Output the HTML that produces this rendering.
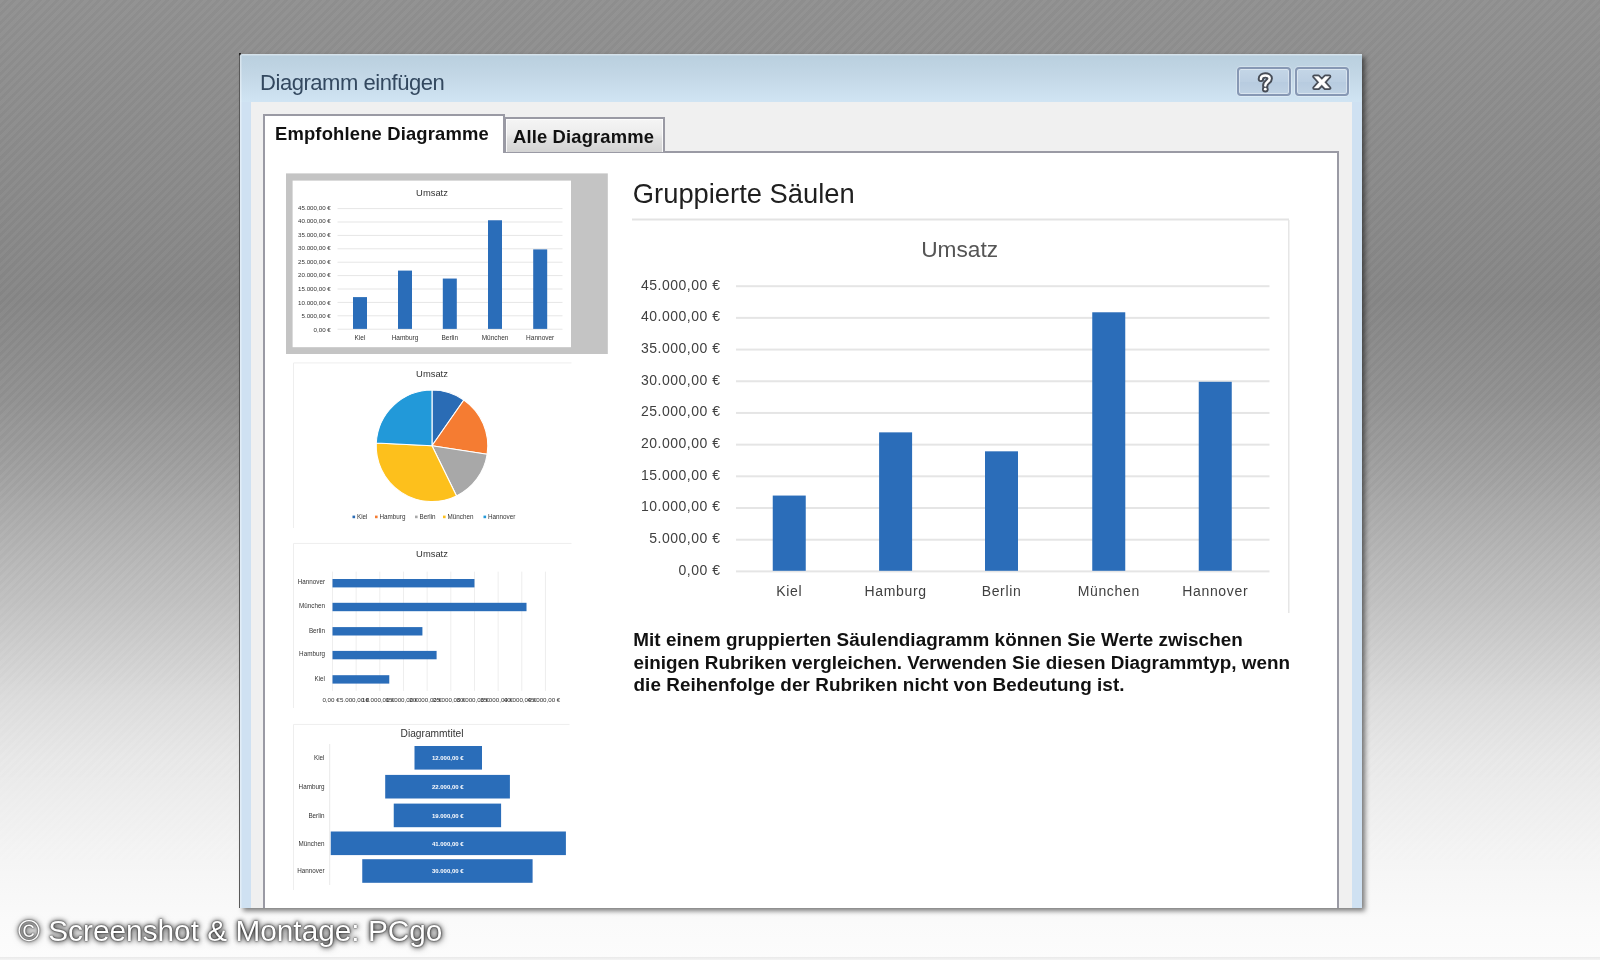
<!DOCTYPE html>
<html lang="de">
<head>
<meta charset="utf-8">
<title>Diagramm einfügen</title>
<style>
html,body{margin:0;padding:0;}
body{width:1600px;height:960px;overflow:hidden;position:relative;font-family:"Liberation Sans",sans-serif;background:#8e8e8e;}
.abs{position:absolute;}
#dlg,#content,#wm{filter:blur(0.4px);}
#bg{left:0;top:0;width:1600px;height:960px;
  background:linear-gradient(to bottom,#919191 0px,#8c8c8c 150px,#878787 300px,#929292 400px,#a4a4a4 480px,#c2c2c2 600px,#dddddd 700px,#e9e9e9 760px,#f4f4f4 850px,#fafafa 920px,#fcfcfc 960px);}
#stripes{left:0;top:0;width:1600px;height:960px;
  background:repeating-linear-gradient(135deg,rgba(255,255,255,0.02) 0px,rgba(255,255,255,0.02) 3px,rgba(0,0,0,0.02) 3px,rgba(0,0,0,0.02) 6px);-webkit-mask-image:linear-gradient(to bottom,#000 0px,#000 450px,rgba(0,0,0,.25) 800px,transparent 900px);mask-image:linear-gradient(to bottom,#000 0px,#000 450px,rgba(0,0,0,.25) 800px,transparent 900px);}
#botline{left:0;top:957px;width:1600px;height:3px;background:linear-gradient(to bottom,#e9e9e9,#f4f4f4);}
#wm{left:18px;top:914px;font-size:29.8px;color:#fff;white-space:nowrap;line-height:34px;
  text-shadow:0 0 2px #000,0 0 5px rgba(0,0,0,.85),1px 1px 7px rgba(0,0,0,.6);}
/* dialog */
#dlg{left:240px;top:54px;width:1122px;height:854px;background:#cfe1f2;box-shadow:3px 3px 5px rgba(0,0,0,.5), -1px 0 0 #5e5e5e;overflow:hidden;border-top-left-radius:3px;}
#titlebar{left:0;top:0;width:1122px;height:48px;background:linear-gradient(to bottom,#b9cfde 0%,#c3d7e6 45%,#d0e4f3 100%);}
#title{left:20px;top:15.5px;font-size:22px;letter-spacing:-0.45px;color:#33485f;white-space:nowrap;line-height:26px;}
#client{left:11px;top:48px;width:1101px;height:806px;background:#f0f0f0;}
.capbtn{top:13.3px;width:53.5px;height:28.8px;box-sizing:border-box;border:2px solid #8798b4;border-radius:4px;background:linear-gradient(to bottom,#c4d6e7 0%,#bccfe2 50%,#b7cbdf 51%,#bfd2e4 100%);box-shadow:inset 0 0 0 1px rgba(255,255,255,.4),0 0 0 1px rgba(255,255,255,.3);}
/* tabs */
#panel{left:23px;top:96.6px;width:1076px;height:760px;background:#fff;border:2px solid #9a9aa4;box-sizing:border-box;}
#tab1{left:23px;top:59.6px;width:242.4px;height:39px;background:#fff;border:2px solid #9a9aa4;border-bottom:none;box-sizing:border-box;}
#tab2{left:263.6px;top:63px;width:161.4px;height:34.6px;background:linear-gradient(to bottom,#f5f5f5 0%,#ececec 45%,#e0e0e0 60%,#d3d3d3 100%);border:2px solid #9a9aa4;border-bottom:none;box-sizing:border-box;box-shadow:inset 1px 1px 0 rgba(255,255,255,.8),inset -1px 0 0 rgba(255,255,255,.8);}
.tabtxt{font-weight:bold;font-size:18.4px;color:#111;white-space:nowrap;line-height:22px;}
</style>
</head>
<body>
<div id="bg" class="abs"></div>
<div id="stripes" class="abs"></div>
<div id="botline" class="abs"></div>

<div class="abs" style="left:238.5px;top:53px;width:2.5px;height:3px;background:#222;filter:blur(0.4px)"></div>
<div id="dlg" class="abs">
  <div id="titlebar" class="abs"></div>
  <div class="abs" style="left:0;top:0;width:1122px;height:854px;box-shadow:inset 1.5px 1.5px 0 rgba(255,255,255,.4);pointer-events:none"></div>
  <div id="title" class="abs">Diagramm einfügen</div>
  <div class="capbtn abs" style="left:997.3px"></div>
  <div class="capbtn abs" style="left:1055.3px"></div>
  <div id="client" class="abs"></div>
  <div id="panel" class="abs"></div>
  <div id="tab2" class="abs"></div>
  <div id="tab1" class="abs"></div>
  <div class="tabtxt abs" style="left:35px;top:69px;letter-spacing:0.17px">Empfohlene Diagramme</div>
  <div class="tabtxt abs" style="left:273px;top:72.2px;letter-spacing:0.15px">Alle Diagramme</div>
  <!--CONTENT-->
</div>

<!--SVG-START-->
<svg class="abs" id="content" style="left:0;top:0" width="1600" height="960" viewBox="0 0 1600 960" font-family="Liberation Sans, sans-serif">
<defs><filter id="b1" x="-5%" y="-5%" width="110%" height="110%"><feGaussianBlur stdDeviation="0.6"/></filter><filter id="b2" x="-5%" y="-20%" width="110%" height="140%"><feGaussianBlur stdDeviation="0.45"/></filter></defs>
<g id="main">
<text x="632.8" y="203" font-size="27.35" fill="#1f1f1f">Gruppierte Säulen</text>
<rect x="632" y="218.5" width="657" height="2" fill="#e3e3e3"/>
<rect x="1288" y="220" width="1.5" height="393" fill="#e6e6e6"/>
<text x="959.6" y="257.2" font-size="22.7" fill="#555" text-anchor="middle">Umsatz</text>
<rect x="736" y="570.40" width="533.5" height="2" fill="#e5e5e5"/>
<text x="720.5" y="574.80" font-size="14" letter-spacing="0.5" fill="#404040" text-anchor="end">0,00 €</text>
<rect x="736" y="538.71" width="533.5" height="2" fill="#e5e5e5"/>
<text x="720.5" y="543.11" font-size="14" letter-spacing="0.5" fill="#404040" text-anchor="end">5.000,00 €</text>
<rect x="736" y="507.02" width="533.5" height="2" fill="#e5e5e5"/>
<text x="720.5" y="511.42" font-size="14" letter-spacing="0.5" fill="#404040" text-anchor="end">10.000,00 €</text>
<rect x="736" y="475.33" width="533.5" height="2" fill="#e5e5e5"/>
<text x="720.5" y="479.73" font-size="14" letter-spacing="0.5" fill="#404040" text-anchor="end">15.000,00 €</text>
<rect x="736" y="443.64" width="533.5" height="2" fill="#e5e5e5"/>
<text x="720.5" y="448.04" font-size="14" letter-spacing="0.5" fill="#404040" text-anchor="end">20.000,00 €</text>
<rect x="736" y="411.95" width="533.5" height="2" fill="#e5e5e5"/>
<text x="720.5" y="416.35" font-size="14" letter-spacing="0.5" fill="#404040" text-anchor="end">25.000,00 €</text>
<rect x="736" y="380.26" width="533.5" height="2" fill="#e5e5e5"/>
<text x="720.5" y="384.66" font-size="14" letter-spacing="0.5" fill="#404040" text-anchor="end">30.000,00 €</text>
<rect x="736" y="348.57" width="533.5" height="2" fill="#e5e5e5"/>
<text x="720.5" y="352.97" font-size="14" letter-spacing="0.5" fill="#404040" text-anchor="end">35.000,00 €</text>
<rect x="736" y="316.88" width="533.5" height="2" fill="#e5e5e5"/>
<text x="720.5" y="321.28" font-size="14" letter-spacing="0.5" fill="#404040" text-anchor="end">40.000,00 €</text>
<rect x="736" y="285.19" width="533.5" height="2" fill="#e5e5e5"/>
<text x="720.5" y="289.59" font-size="14" letter-spacing="0.5" fill="#404040" text-anchor="end">45.000,00 €</text>
<rect x="772.75" y="495.56" width="33" height="75.24" fill="#2b6db9"/>
<text x="789.25" y="596" font-size="14" letter-spacing="0.65" fill="#404040" text-anchor="middle">Kiel</text>
<rect x="879.10" y="432.36" width="33" height="138.44" fill="#2b6db9"/>
<text x="895.60" y="596" font-size="14" letter-spacing="0.65" fill="#404040" text-anchor="middle">Hamburg</text>
<rect x="985.00" y="451.32" width="33" height="119.48" fill="#2b6db9"/>
<text x="1001.50" y="596" font-size="14" letter-spacing="0.65" fill="#404040" text-anchor="middle">Berlin</text>
<rect x="1092.25" y="312.28" width="33" height="258.52" fill="#2b6db9"/>
<text x="1108.75" y="596" font-size="14" letter-spacing="0.65" fill="#404040" text-anchor="middle">München</text>
<rect x="1198.75" y="381.80" width="33" height="189.00" fill="#2b6db9"/>
<text x="1215.25" y="596" font-size="14" letter-spacing="0.65" fill="#404040" text-anchor="middle">Hannover</text>
</g>
<g font-size="18.86" font-weight="bold" fill="#111" lengthAdjust="spacing">
<text x="633.3" y="646" textLength="609.5">Mit einem gruppierten Säulendiagramm können Sie Werte zwischen</text>
<text x="633.5" y="668.6" textLength="656.5">einigen Rubriken vergleichen. Verwenden Sie diesen Diagrammtyp, wenn</text>
<text x="633.5" y="691.2" textLength="491">die Reihenfolge der Rubriken nicht von Bedeutung ist.</text>
</g>
<g id="thumbs">
<rect x="286" y="173.4" width="321.8" height="180.6" fill="#c4c4c4"/>
<rect x="292.6" y="180.6" width="278.4" height="166.6" fill="#fff"/>
<g filter="url(#b1)">
<text x="432.00" y="195.50" font-size="9.4" text-anchor="middle" fill="#333" font-weight="normal" letter-spacing="0">Umsatz</text>
<rect x="337.5" y="328.70" width="225" height="1" fill="#e6e6e6"/>
<text x="330.75" y="331.60" font-size="6.2" text-anchor="end" fill="#333" font-weight="normal" letter-spacing="0">0,00 €</text>
<rect x="337.5" y="315.30" width="225" height="1" fill="#e6e6e6"/>
<text x="330.75" y="318.05" font-size="6.2" text-anchor="end" fill="#333" font-weight="normal" letter-spacing="0">5.000,00 €</text>
<rect x="337.5" y="301.90" width="225" height="1" fill="#e6e6e6"/>
<text x="330.75" y="304.50" font-size="6.2" text-anchor="end" fill="#333" font-weight="normal" letter-spacing="0">10.000,00 €</text>
<rect x="337.5" y="288.50" width="225" height="1" fill="#e6e6e6"/>
<text x="330.75" y="290.95" font-size="6.2" text-anchor="end" fill="#333" font-weight="normal" letter-spacing="0">15.000,00 €</text>
<rect x="337.5" y="275.10" width="225" height="1" fill="#e6e6e6"/>
<text x="330.75" y="277.40" font-size="6.2" text-anchor="end" fill="#333" font-weight="normal" letter-spacing="0">20.000,00 €</text>
<rect x="337.5" y="261.70" width="225" height="1" fill="#e6e6e6"/>
<text x="330.75" y="263.85" font-size="6.2" text-anchor="end" fill="#333" font-weight="normal" letter-spacing="0">25.000,00 €</text>
<rect x="337.5" y="248.30" width="225" height="1" fill="#e6e6e6"/>
<text x="330.75" y="250.30" font-size="6.2" text-anchor="end" fill="#333" font-weight="normal" letter-spacing="0">30.000,00 €</text>
<rect x="337.5" y="234.90" width="225" height="1" fill="#e6e6e6"/>
<text x="330.75" y="236.75" font-size="6.2" text-anchor="end" fill="#333" font-weight="normal" letter-spacing="0">35.000,00 €</text>
<rect x="337.5" y="221.50" width="225" height="1" fill="#e6e6e6"/>
<text x="330.75" y="223.20" font-size="6.2" text-anchor="end" fill="#333" font-weight="normal" letter-spacing="0">40.000,00 €</text>
<rect x="337.5" y="208.10" width="225" height="1" fill="#e6e6e6"/>
<text x="330.75" y="209.65" font-size="6.2" text-anchor="end" fill="#333" font-weight="normal" letter-spacing="0">45.000,00 €</text>
<rect x="353.00" y="297.10" width="14" height="31.80" fill="#2b6db9"/>
<text x="360.00" y="340.30" font-size="6.5" text-anchor="middle" fill="#333" font-weight="normal" letter-spacing="0">Kiel</text>
<rect x="398.00" y="270.60" width="14" height="58.30" fill="#2b6db9"/>
<text x="405.00" y="340.30" font-size="6.5" text-anchor="middle" fill="#333" font-weight="normal" letter-spacing="0">Hamburg</text>
<rect x="442.80" y="278.55" width="14" height="50.35" fill="#2b6db9"/>
<text x="449.80" y="340.30" font-size="6.5" text-anchor="middle" fill="#333" font-weight="normal" letter-spacing="0">Berlin</text>
<rect x="488.00" y="220.25" width="14" height="108.65" fill="#2b6db9"/>
<text x="495.00" y="340.30" font-size="6.5" text-anchor="middle" fill="#333" font-weight="normal" letter-spacing="0">München</text>
<rect x="533.20" y="249.40" width="14" height="79.50" fill="#2b6db9"/>
<text x="540.20" y="340.30" font-size="6.5" text-anchor="middle" fill="#333" font-weight="normal" letter-spacing="0">Hannover</text>
</g>
<path d="M293.5 528 V362.9 H571.5" fill="none" stroke="#eeeeee" stroke-width="1"/>
<g filter="url(#b1)">
<text x="432.00" y="376.60" font-size="9.4" text-anchor="middle" fill="#333" font-weight="normal" letter-spacing="0">Umsatz</text>
<path d="M432.0 445.8 L432.00 390.00 A55.8 55.8 0 0 1 463.88 400.00 Z" fill="#2b6cb5" stroke="#fff" stroke-width="1.1" stroke-linejoin="round"/>
<path d="M432.0 445.8 L463.88 400.00 A55.8 55.8 0 0 1 487.16 454.25 Z" fill="#f57c30" stroke="#fff" stroke-width="1.1" stroke-linejoin="round"/>
<path d="M432.0 445.8 L487.16 454.25 A55.8 55.8 0 0 1 456.57 495.90 Z" fill="#a8a8a8" stroke="#fff" stroke-width="1.1" stroke-linejoin="round"/>
<path d="M432.0 445.8 L456.57 495.90 A55.8 55.8 0 0 1 376.27 442.97 Z" fill="#fdc01f" stroke="#fff" stroke-width="1.1" stroke-linejoin="round"/>
<path d="M432.0 445.8 L376.27 442.97 A55.8 55.8 0 0 1 432.00 390.00 Z" fill="#2299d9" stroke="#fff" stroke-width="1.1" stroke-linejoin="round"/>
<rect x="352.5" y="515.6" width="2.6" height="2.6" fill="#2b6cb5"/>
<text x="357.00" y="519.40" font-size="6.3" text-anchor="start" fill="#333" font-weight="normal" letter-spacing="0">Kiel</text>
<rect x="375.0" y="515.6" width="2.6" height="2.6" fill="#f57c30"/>
<text x="379.50" y="519.40" font-size="6.3" text-anchor="start" fill="#333" font-weight="normal" letter-spacing="0">Hamburg</text>
<rect x="415.0" y="515.6" width="2.6" height="2.6" fill="#a8a8a8"/>
<text x="419.50" y="519.40" font-size="6.3" text-anchor="start" fill="#333" font-weight="normal" letter-spacing="0">Berlin</text>
<rect x="443.0" y="515.6" width="2.6" height="2.6" fill="#fdc01f"/>
<text x="447.50" y="519.40" font-size="6.3" text-anchor="start" fill="#333" font-weight="normal" letter-spacing="0">München</text>
<rect x="483.5" y="515.6" width="2.6" height="2.6" fill="#2299d9"/>
<text x="488.00" y="519.40" font-size="6.3" text-anchor="start" fill="#333" font-weight="normal" letter-spacing="0">Hannover</text>
</g>
<path d="M293.5 708 V543.4 H571.5" fill="none" stroke="#eeeeee" stroke-width="1"/>
<g filter="url(#b1)">
<text x="432.00" y="557.40" font-size="9.4" text-anchor="middle" fill="#333" font-weight="normal" letter-spacing="0">Umsatz</text>
<rect x="332.00" y="571.6" width="1" height="119.3" fill="#eeeeee"/>
<text x="331.00" y="702.00" font-size="6.2" text-anchor="middle" fill="#333" font-weight="normal" letter-spacing="0">0,00 €</text>
<rect x="355.66" y="571.6" width="1" height="119.3" fill="#eeeeee"/>
<text x="354.66" y="702.00" font-size="6.2" text-anchor="middle" fill="#333" font-weight="normal" letter-spacing="0">5.000,00 €</text>
<rect x="379.32" y="571.6" width="1" height="119.3" fill="#eeeeee"/>
<text x="378.32" y="702.00" font-size="6.2" text-anchor="middle" fill="#333" font-weight="normal" letter-spacing="0">10.000,00 €</text>
<rect x="402.98" y="571.6" width="1" height="119.3" fill="#eeeeee"/>
<text x="401.98" y="702.00" font-size="6.2" text-anchor="middle" fill="#333" font-weight="normal" letter-spacing="0">15.000,00 €</text>
<rect x="426.64" y="571.6" width="1" height="119.3" fill="#eeeeee"/>
<text x="425.64" y="702.00" font-size="6.2" text-anchor="middle" fill="#333" font-weight="normal" letter-spacing="0">20.000,00 €</text>
<rect x="450.30" y="571.6" width="1" height="119.3" fill="#eeeeee"/>
<text x="449.30" y="702.00" font-size="6.2" text-anchor="middle" fill="#333" font-weight="normal" letter-spacing="0">25.000,00 €</text>
<rect x="473.96" y="571.6" width="1" height="119.3" fill="#eeeeee"/>
<text x="472.96" y="702.00" font-size="6.2" text-anchor="middle" fill="#333" font-weight="normal" letter-spacing="0">30.000,00 €</text>
<rect x="497.62" y="571.6" width="1" height="119.3" fill="#eeeeee"/>
<text x="496.62" y="702.00" font-size="6.2" text-anchor="middle" fill="#333" font-weight="normal" letter-spacing="0">35.000,00 €</text>
<rect x="521.28" y="571.6" width="1" height="119.3" fill="#eeeeee"/>
<text x="520.28" y="702.00" font-size="6.2" text-anchor="middle" fill="#333" font-weight="normal" letter-spacing="0">40.000,00 €</text>
<rect x="544.94" y="571.6" width="1" height="119.3" fill="#eeeeee"/>
<text x="543.94" y="702.00" font-size="6.2" text-anchor="middle" fill="#333" font-weight="normal" letter-spacing="0">45.000,00 €</text>
<rect x="332.50" y="579.00" width="141.96" height="8.4" fill="#2b6db9"/>
<text x="325.00" y="584.40" font-size="6.3" text-anchor="end" fill="#333" font-weight="normal" letter-spacing="0">Hannover</text>
<rect x="332.50" y="602.80" width="194.01" height="8.4" fill="#2b6db9"/>
<text x="325.00" y="608.20" font-size="6.3" text-anchor="end" fill="#333" font-weight="normal" letter-spacing="0">München</text>
<rect x="332.50" y="627.10" width="89.91" height="8.4" fill="#2b6db9"/>
<text x="325.00" y="632.50" font-size="6.3" text-anchor="end" fill="#333" font-weight="normal" letter-spacing="0">Berlin</text>
<rect x="332.50" y="650.90" width="104.10" height="8.4" fill="#2b6db9"/>
<text x="325.00" y="656.30" font-size="6.3" text-anchor="end" fill="#333" font-weight="normal" letter-spacing="0">Hamburg</text>
<rect x="332.50" y="675.20" width="56.78" height="8.4" fill="#2b6db9"/>
<text x="325.00" y="680.60" font-size="6.3" text-anchor="end" fill="#333" font-weight="normal" letter-spacing="0">Kiel</text>
</g>
<path d="M293.5 890 V724.4 H569.5" fill="none" stroke="#eeeeee" stroke-width="1"/>
<g filter="url(#b1)">
<text x="432.00" y="737.00" font-size="10.2" text-anchor="middle" fill="#333" font-weight="normal" letter-spacing="0">Diagrammtitel</text>
<rect x="329.2" y="744" width="1" height="141" fill="#e9e9e9"/>
<rect x="414.50" y="746.00" width="67.50" height="23.6" fill="#2b6db9"/>
<text x="324.50" y="760.00" font-size="6.3" text-anchor="end" fill="#333" font-weight="normal" letter-spacing="0">Kiel</text>
<text x="447.75" y="760.00" font-size="6" text-anchor="middle" fill="#fff" font-weight="bold" letter-spacing="0">12.000,00 €</text>
<rect x="385.20" y="774.90" width="124.70" height="23.6" fill="#2b6db9"/>
<text x="324.50" y="788.90" font-size="6.3" text-anchor="end" fill="#333" font-weight="normal" letter-spacing="0">Hamburg</text>
<text x="447.75" y="788.90" font-size="6" text-anchor="middle" fill="#fff" font-weight="bold" letter-spacing="0">22.000,00 €</text>
<rect x="393.75" y="803.60" width="107.35" height="23.6" fill="#2b6db9"/>
<text x="324.50" y="817.60" font-size="6.3" text-anchor="end" fill="#333" font-weight="normal" letter-spacing="0">Berlin</text>
<text x="447.75" y="817.60" font-size="6" text-anchor="middle" fill="#fff" font-weight="bold" letter-spacing="0">19.000,00 €</text>
<rect x="330.75" y="831.50" width="235.15" height="23.6" fill="#2b6db9"/>
<text x="324.50" y="845.50" font-size="6.3" text-anchor="end" fill="#333" font-weight="normal" letter-spacing="0">München</text>
<text x="447.75" y="845.50" font-size="6" text-anchor="middle" fill="#fff" font-weight="bold" letter-spacing="0">41.000,00 €</text>
<rect x="362.25" y="859.20" width="170.35" height="23.6" fill="#2b6db9"/>
<text x="324.50" y="873.20" font-size="6.3" text-anchor="end" fill="#333" font-weight="normal" letter-spacing="0">Hannover</text>
<text x="447.75" y="873.20" font-size="6" text-anchor="middle" fill="#fff" font-weight="bold" letter-spacing="0">30.000,00 €</text>
</g>
</g>
<g id="capicons">
<g fill="none" stroke-linecap="round"><path d="M1260.9 78.9 C1260.7 74.4 1269.7 74.2 1269.7 78.6 C1269.7 81.9 1265.3 81.8 1265.3 85.6" stroke="#474d57" stroke-width="6.4"/><circle cx="1265.3" cy="89.2" r="3.3" fill="#474d57"/><path d="M1260.9 78.9 C1260.7 74.4 1269.7 74.2 1269.7 78.6 C1269.7 81.9 1265.3 81.8 1265.3 85.6" stroke="#fff" stroke-width="2.5"/><circle cx="1265.3" cy="89.2" r="1.4" fill="#fff"/></g>
<path d="M1314.2 76.5 L1318.4 76.5 L1321.8 80.0 L1325.2 76.5 L1329.4 76.5 L1324.3 82.3 L1329.4 88.1 L1325.2 88.1 L1321.8 84.6 L1318.4 88.1 L1314.2 88.1 L1319.3 82.3 Z" fill="#474d57" stroke="#474d57" stroke-width="3.8" stroke-linejoin="round"/><path d="M1314.2 76.5 L1318.4 76.5 L1321.8 80.0 L1325.2 76.5 L1329.4 76.5 L1324.3 82.3 L1329.4 88.1 L1325.2 88.1 L1321.8 84.6 L1318.4 88.1 L1314.2 88.1 L1319.3 82.3 Z" fill="#fff" stroke="#fff" stroke-width="0.4" stroke-linejoin="round"/>
</g>
</svg>
<!--SVG-END-->
<div id="wm" class="abs">© Screenshot &amp; Montage: PCgo</div>
</body>
</html>
